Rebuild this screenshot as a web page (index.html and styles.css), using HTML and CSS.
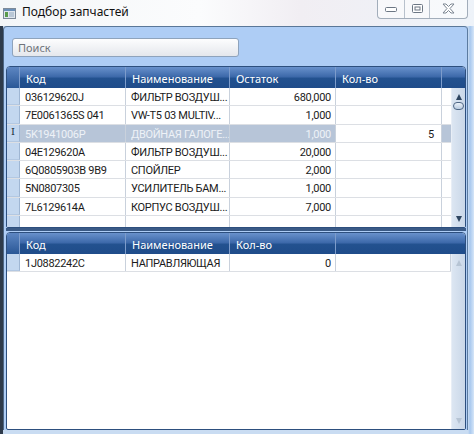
FILE: index.html
```html
<!DOCTYPE html>
<html lang="ru">
<head>
    <meta charset="UTF-8">
    <title>Подбор запчастей</title>
    <link rel="stylesheet" href="styles.css">
</head>
<body>
<div class="window">
    <div class="titlebar">
        <svg class="app-icon" width="13" height="11" viewBox="0 0 13 11">
            <rect x="0.5" y="0.5" width="12" height="10" fill="#dfe6ee" stroke="#7d8a99"/>
            <rect x="1" y="1" width="11" height="2" fill="#6b8fb8"/>
            <rect x="2" y="4" width="3" height="5" fill="#5a9a4c"/>
            <rect x="6" y="4" width="5" height="5" fill="#b9c7d6"/>
        </svg>
        <span class="title">Подбор запчастей</span>
        <div class="caption-buttons">
            <div class="cap-btn min">
                <svg width="12" height="6" viewBox="0 0 12 6"><rect x="0.5" y="1.5" width="11" height="4" rx="1" fill="#fff" stroke="#6c7784"/></svg>
            </div>
            <div class="cap-btn max">
                <svg width="11" height="9" viewBox="0 0 11 9"><rect x="0.5" y="0.5" width="10" height="8" rx="1" fill="#fff" stroke="#6c7784"/><rect x="3" y="3" width="5" height="3" fill="none" stroke="#6c7784"/></svg>
            </div>
            <div class="cap-btn close">
                <svg width="13" height="11" viewBox="0 0 13 11"><path d="M1 1 H4 L6.5 3.5 L9 1 H12 L8 5.5 L12 10 H9 L6.5 7.5 L4 10 H1 L5 5.5 Z" fill="#fff" stroke="#7b8591" stroke-linejoin="round"/></svg>
            </div>
        </div>
    </div>

    <div class="client">
        <div class="search-row">
            <input class="search" type="text" placeholder="Поиск">
        </div>

        <div class="grid grid-parts">
            <div class="grid-head">
                <div class="hcell sel"></div>
                <div class="hcell">Код</div>
                <div class="hcell">Наименование</div>
                <div class="hcell">Остаток</div>
                <div class="hcell">Кол-во</div>
                <div class="hcell last"></div>
            </div>
            <div class="grid-body">
                <div class="rows">
                    <div class="row"><div class="cell sel"></div><div class="cell">036129620J</div><div class="cell">ФИЛЬТР ВОЗДУШ...</div><div class="cell num">680,000</div><div class="cell num"></div><div class="cell fill"></div></div>
                    <div class="row"><div class="cell sel"></div><div class="cell">7E0061365S 041</div><div class="cell">VW-T5 03 MULTIV...</div><div class="cell num">1,000</div><div class="cell num"></div><div class="cell fill"></div></div>
                    <div class="row selected"><div class="cell sel">I</div><div class="cell">5K1941006P</div><div class="cell">ДВОЙНАЯ ГАЛОГЕ...</div><div class="cell num">1,000</div><div class="cell num edit">5</div><div class="cell fill"></div></div>
                    <div class="row"><div class="cell sel"></div><div class="cell">04E129620A</div><div class="cell">ФИЛЬТР ВОЗДУШ...</div><div class="cell num">20,000</div><div class="cell num"></div><div class="cell fill"></div></div>
                    <div class="row"><div class="cell sel"></div><div class="cell">6Q0805903B 9B9</div><div class="cell">СПОЙЛЕР</div><div class="cell num">2,000</div><div class="cell num"></div><div class="cell fill"></div></div>
                    <div class="row"><div class="cell sel"></div><div class="cell">5N0807305</div><div class="cell">УСИЛИТЕЛЬ БАМ...</div><div class="cell num">1,000</div><div class="cell num"></div><div class="cell fill"></div></div>
                    <div class="row"><div class="cell sel"></div><div class="cell">7L6129614A</div><div class="cell">КОРПУС ВОЗДУШ...</div><div class="cell num">7,000</div><div class="cell num"></div><div class="cell fill"></div></div>
                    <div class="row partial"><div class="cell sel"></div><div class="cell"></div><div class="cell"></div><div class="cell"></div><div class="cell"></div><div class="cell fill"></div></div>
                </div>
                <div class="scrollbar">
                    <span class="arrow up"></span>
                    <span class="thumb"></span>
                    <span class="track"></span>
                    <span class="arrow down"></span>
                </div>
            </div>
        </div>

        <div class="splitter"></div>

        <div class="grid grid-cart">
            <div class="grid-head">
                <div class="hcell sel"></div>
                <div class="hcell">Код</div>
                <div class="hcell">Наименование</div>
                <div class="hcell">Кол-во</div>
                <div class="hcell last"></div>
            </div>
            <div class="grid-body">
                <div class="rows">
                    <div class="row"><div class="cell sel"></div><div class="cell">1J0882242C</div><div class="cell">НАПРАВЛЯЮЩАЯ</div><div class="cell num">0</div><div class="cell fill"></div></div>
                </div>
                <div class="scrollbar disabled">
                    <span class="arrow up"></span>
                    <span class="track"></span>
                    <span class="arrow down"></span>
                </div>
            </div>
        </div>
    </div>
</div>
</body>
</html>
```

FILE: styles.css
```css
body {
    margin: 0;
    width: 474px;
    height: 434px;
    overflow: hidden;
    font-family: Roboto, "Noto Sans", sans-serif;
    font-size: 11px;
    color: #1b1b1b;
    background: #9fc0e6;
}

.window {
    width: 474px;
    height: 434px;
    display: flex;
    flex-direction: column;
    background: linear-gradient(to right, #2e3b4b 0, #2e3b4b 3px, #c9dcf2 3px, #c9dcf2 468px, #a8c8ee 470px, #d6e6f8 474px);
}

/* title bar */
.titlebar {
    height: 26px;
    flex: none;
    display: flex;
    align-items: center;
    position: relative;
    background: linear-gradient(to right, #f4f6f8 0, #fbfcfd 200px, #f1eef3 300px, #eef3f9 474px);
}

.app-icon {
    margin-left: 3px;
    margin-right: 6px;
}

.title {
    font-family: "Noto Sans", sans-serif;
    font-size: 12px;
    color: #111;
    margin-top: -3px;
}

.caption-buttons {
    position: absolute;
    top: -1px;
    left: 377px;
    display: flex;
    height: 19px;
    border: 1px solid #a2adba;
    border-top: none;
    border-radius: 0 0 4px 4px;
    background: rgba(255, 255, 255, 0.55);
}

.cap-btn {
    display: flex;
    align-items: center;
    justify-content: center;
}

.cap-btn.min { width: 26px; border-right: 1px solid #b8c1cc; }
.cap-btn.max { width: 24px; border-right: 1px solid #b8c1cc; }
.cap-btn.close { width: 37px; }

/* client area */
.client {
    flex: 1;
    margin: 0 6px 4px 3px;
    padding: 0 1px 0 2px;
    display: flex;
    flex-direction: column;
    background: #aecdf5;
    border-top: 1px solid #5a7798;
    border-left: 1px solid #4d6684;
    border-right: 1px solid #5b7ba0;
    border-radius: 4px 4px 0 0;
}

.search-row {
    padding: 11px 0 9px 6px;
}

.search {
    display: block;
    width: 227px;
    height: 19px;
    box-sizing: border-box;
    border: 1px solid #8ea3bc;
    border-radius: 3px;
    background: linear-gradient(#fdfdfe, #e4e7ec);
    font-family: "Noto Sans", sans-serif;
    font-size: 11px;
    padding: 0 5px;
}

.search::placeholder {
    color: #6f747a;
}

/* data grids */
.grid {
    display: flex;
    flex-direction: column;
    border: 1px solid #2d4f7e;
    border-radius: 4px 4px 2px 2px;
    background: #fff;
    overflow: hidden;
}

.grid-parts {
    height: 160px;
    flex: none;
}

.grid-cart {
    flex: 1;
}

.grid-head {
    display: grid;
    height: 21px;
    flex: none;
    background: linear-gradient(#6891cc 0, #3e6aab 45%, #22518f 55%, #1f4c8a 100%);
    color: #fff;
}

.grid-parts .grid-head,
.grid-parts .row {
    grid-template-columns: 13px 106px 104px 106px 106px 1fr;
}

.grid-cart .grid-head,
.grid-cart .row {
    grid-template-columns: 13px 106px 104px 106px 1fr;
}

.grid-parts .row .fill {
    border-right: none;
}

.hcell {
    border-right: 1px solid #7d9ccb;
    padding: 4px 0 0 6px;
    font-family: "Noto Sans", sans-serif;
    font-size: 11px;
    white-space: nowrap;
    overflow: hidden;
}

.hcell.sel {
    padding: 0;
    background: linear-gradient(#5d86c2, #2a5796);
}

.hcell.last {
    border-right: none;
}

.grid-body {
    flex: 1;
    display: flex;
    min-height: 0;
}

.rows {
    flex: 1;
}

.row {
    display: grid;
    height: 18.3px;
    box-sizing: border-box;
    border-bottom: 1px solid #dcdfe4;
}

.row.partial {
    border-bottom: none;
}

.cell {
    padding: 3px 0 0 5px;
    letter-spacing: -0.3px;
    white-space: nowrap;
    overflow: hidden;
    border-right: 1px solid #c9d1dc;
}

.cell.num {
    text-align: right;
    padding: 3px 4px 0 0;
}

.cell.sel {
    padding: 1px 0 0 4px;
    background: #c3d7ef;
    border-right: 1px solid #9fb6d3;
    border-bottom: 1px solid #b3c8e2;
    font-family: "DejaVu Serif", serif;
    font-size: 10px;
    color: #203040;
}

.row.selected {
    background: #b7c5d8;
    color: #eef2f7;
}

.row.selected .cell.sel {
    background: #c3d7ef;
}

.row.selected .cell.edit {
    background: #fff;
    color: #1b1b1b;
    padding-right: 7px;
}

.scrollbar {
    width: 13px;
    flex: none;
    display: flex;
    flex-direction: column;
    align-items: center;
    background: linear-gradient(to right, #dce6f2, #c9d7e8);
    border-left: 1px solid #e8eef6;
}

.scrollbar .track {
    flex: 1;
}

.arrow {
    width: 0;
    height: 0;
    border-left: 3px solid transparent;
    border-right: 3px solid transparent;
}

.arrow.up {
    margin-top: 6px;
    border-bottom: 6px solid #2e4560;
}

.arrow.down {
    margin-bottom: 5px;
    border-top: 6px solid #2e4560;
}

.thumb {
    width: 9px;
    height: 6px;
    margin-top: 2px;
    border: 1px solid #4f6785;
    border-radius: 5px;
    background: linear-gradient(#eaf1f9, #b9cbe0);
}

.scrollbar.disabled .arrow.up {
    border-bottom-color: #b6c4d4;
}

.scrollbar.disabled .arrow.down {
    border-top-color: #b6c4d4;
}

.splitter {
    height: 3px;
    flex: none;
    background: #3a5a86;
    margin: 0 0 1px 0;
}
```
